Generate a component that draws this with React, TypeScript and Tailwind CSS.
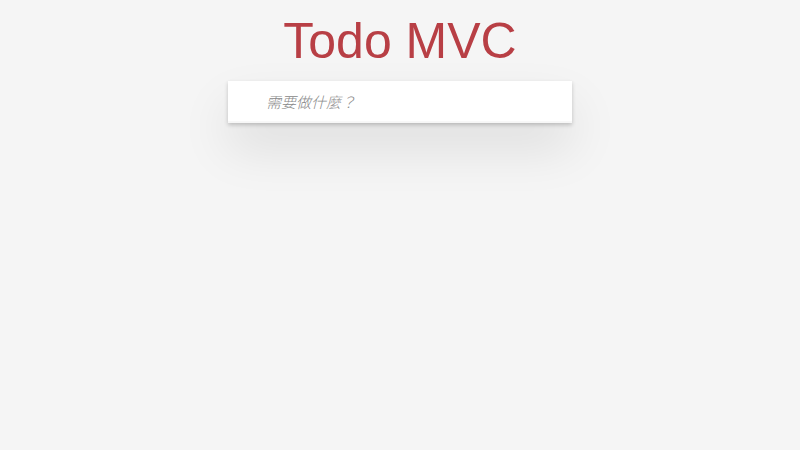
export default function App() {
  return (
    <div className="min-h-[450px] w-full bg-[#f5f5f5] flex flex-col items-center pt-[16px] font-['Liberation_Sans','Noto_Sans_CJK_TC',sans-serif]">
      <h1 className="text-[50px] leading-[50px] text-[#b83f45] font-normal">Todo MVC</h1>
      <div className="mt-[15px] w-[344px] bg-white shadow-[0_2px_4px_rgba(0,0,0,0.2),0_25px_50px_rgba(0,0,0,0.1)]">
        <input
          type="text"
          placeholder="需要做什麼？"
          className="w-full h-[42px] pl-[38px] pr-4 pb-[2px] text-[15px] italic font-light text-[#4d4d4d] placeholder:text-[#888888] bg-transparent outline-none shadow-[inset_0_-2px_1px_rgba(0,0,0,0.03)] font-['Noto_Sans_CJK_TC','Liberation_Sans',sans-serif]"
        />
      </div>
    </div>
  );
}
